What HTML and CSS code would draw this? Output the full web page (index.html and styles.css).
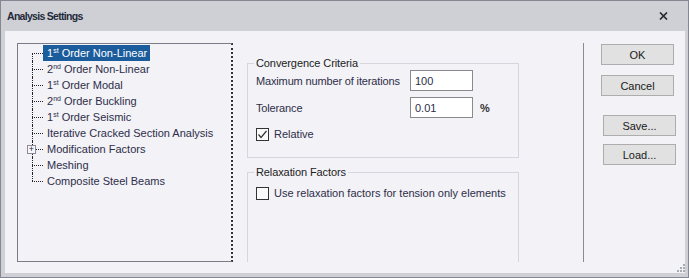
FILE: index.html
```html
<!DOCTYPE html>
<html lang="en">
<head>
    <meta charset="UTF-8">
    <title>Analysis Settings</title>
    <link rel="stylesheet" href="styles.css">
</head>
<body>

<div class="window">
    <div class="titlebar">
        <span class="title">Analysis Settings</span>
        <svg class="close" width="9" height="8" viewBox="0 0 9 8">
            <path d="M1 0.5 L8 7.5 M8 0.5 L1 7.5" stroke="#2b2b33" stroke-width="1.7"/>
        </svg>
    </div>

    <div class="client">
        <!-- Settings tree -->
        <ul class="tree">
            <li class="node first"><span class="branch"></span><span class="label selected">1<sup>st</sup> Order Non-Linear</span></li>
            <li class="node"><span class="branch"></span><span class="label">2<sup>nd</sup> Order Non-Linear</span></li>
            <li class="node"><span class="branch"></span><span class="label">1<sup>st</sup> Order Modal</span></li>
            <li class="node"><span class="branch"></span><span class="label">2<sup>nd</sup> Order Buckling</span></li>
            <li class="node"><span class="branch"></span><span class="label">1<sup>st</sup> Order Seismic</span></li>
            <li class="node"><span class="branch"></span><span class="label">Iterative Cracked Section Analysis</span></li>
            <li class="node"><span class="branch"><span class="expander">+</span></span><span class="label">Modification Factors</span></li>
            <li class="node"><span class="branch"></span><span class="label">Meshing</span></li>
            <li class="node last"><span class="branch"></span><span class="label">Composite Steel Beams</span></li>
        </ul>

        <!-- Settings page -->
        <div class="settings">
            <fieldset class="group">
                <legend>Convergence Criteria</legend>
                <div class="field-grid">
                    <label for="max-iter">Maximum number of iterations</label>
                    <input type="text" id="max-iter" value="100">
                    <span></span>
                    <label for="tolerance">Tolerance</label>
                    <input type="text" id="tolerance" value="0.01">
                    <span class="unit">%</span>
                </div>
                <div class="check">
                    <span class="box">
                        <svg width="11" height="11" viewBox="0 0 11 11">
                            <path d="M1.5 5.5 L4 8.5 L9.5 2" fill="none" stroke="#333" stroke-width="1.2"/>
                        </svg>
                    </span>
                    Relative
                </div>
            </fieldset>

            <fieldset class="group open">
                <legend>Relaxation Factors</legend>
                <div class="check">
                    <span class="box"></span>
                    Use relaxation factors for tension only elements
                </div>
            </fieldset>
        </div>

        <div class="separator"></div>

        <!-- Dialog buttons -->
        <div class="actions">
            <button class="ok">OK</button>
            <button class="cancel">Cancel</button>
            <button class="save">Save...</button>
            <button class="load">Load...</button>
        </div>

        <svg class="grip" width="8" height="8" viewBox="0 0 8 8">
            <rect x="6" y="0" width="2" height="2" fill="#a9a9b2"/>
            <rect x="3" y="3" width="2" height="2" fill="#a9a9b2"/>
            <rect x="6" y="3" width="2" height="2" fill="#a9a9b2"/>
            <rect x="0" y="6" width="2" height="2" fill="#a9a9b2"/>
            <rect x="3" y="6" width="2" height="2" fill="#a9a9b2"/>
            <rect x="6" y="6" width="2" height="2" fill="#a9a9b2"/>
        </svg>
    </div>
</div>

</body>
</html>
```

FILE: styles.css
```css
body {
    margin: 0;
    font-family: "Liberation Sans", Arial, sans-serif;
    font-size: 11px;
    color: #2e2e48;
}

.window {
    width: 689px;
    height: 278px;
    box-sizing: border-box;
    border: 1px solid #858892;
    background-color: #cfd0d5;
    display: flex;
    flex-direction: column;
}

.titlebar {
    height: 30px;
    flex: none;
    display: flex;
    align-items: center;
    padding-left: 6px;
}

.title {
    font-size: 10.5px;
    font-weight: bold;
    letter-spacing: -0.7px;
    color: #1f2a3a;
}

.close {
    margin-left: auto;
    margin-right: 20px;
}

.client {
    flex: 1;
    margin: 0 3px 4px 4px;
    background-color: #f2f2f7;
    display: flex;
    padding: 12px 0 11px 12px;
    position: relative;
}

/* tree */

.tree {
    width: 216px;
    box-sizing: border-box;
    margin: 0;
    padding: 1px 0 0 0;
    list-style: none;
    border: 1px solid #7c7c88;
    border-right: 2px dotted #333;
}

.node {
    display: flex;
    height: 16px;
    padding-left: 9px;
}

.branch {
    position: relative;
    width: 16px;
    flex: none;
}

.branch::before {
    content: "";
    position: absolute;
    left: 5px;
    top: 0;
    height: 16px;
    border-left: 1px dotted #222;
}

.node.first .branch::before {
    top: 8px;
    height: 8px;
}

.node.last .branch::before {
    height: 8px;
}

.branch::after {
    content: "";
    position: absolute;
    left: 5px;
    top: 8px;
    width: 11px;
    border-top: 1px dotted #222;
}

.expander {
    position: absolute;
    left: 0;
    top: 4px;
    width: 9px;
    height: 9px;
    box-sizing: border-box;
    border: 1px solid #8a8a98;
    background-color: #f7f7fb;
    z-index: 1;
    font-size: 9px;
    line-height: 6px;
    text-align: center;
    color: #2a2a40;
}

.label {
    padding: 0 3px 0 4px;
    line-height: 16px;
    white-space: nowrap;
}

.label sup {
    font-size: 7px;
    vertical-align: 4px;
    line-height: 0;
}

.label.selected {
    background-color: #1b5c9c;
    color: #fff;
}

/* settings groups */

.settings {
    width: 272px;
    margin-left: 14px;
    display: flex;
    flex-direction: column;
    padding-top: 13px;
    box-sizing: border-box;
}

.group {
    margin: 0;
    padding: 0 7px 16px 8px;
    border: 1px solid #d6d6de;
    min-width: 0;
}

.group legend {
    padding: 0 2px;
    margin-left: -2px;
    line-height: 14px;
    color: #222;
    letter-spacing: -0.1px;
}

.group.open {
    flex: 1;
    margin-top: 7px;
    border-bottom: none;
    padding-top: 7px;
}

.field-grid {
    display: grid;
    grid-template-columns: 154px 63px auto;
    row-gap: 6px;
    align-items: center;
}

.field-grid label {
    letter-spacing: -0.15px;
}

.field-grid input {
    width: 63px;
    height: 21px;
    box-sizing: border-box;
    border: 1px solid #8a8a8e;
    background-color: #fff;
    font-family: inherit;
    font-size: 11px;
    color: #2e2e48;
    padding: 0 4px;
    margin: 0;
}

.unit {
    margin-left: 7px;
    font-weight: bold;
    color: #333;
}

.check {
    display: flex;
    align-items: center;
    gap: 5px;
    margin-top: 9px;
    line-height: 14px;
}

.group.open .check {
    margin-top: 0;
}

.box {
    width: 13px;
    height: 13px;
    box-sizing: border-box;
    border: 1px solid #333;
    background-color: #fafafc;
    display: flex;
    align-items: center;
    justify-content: center;
}

/* right side */

.separator {
    width: 1px;
    margin-left: 64px;
    background-color: #8a8a92;
}

.actions {
    display: flex;
    flex-direction: column;
    margin-left: 17px;
}

.actions button {
    width: 73px;
    height: 21px;
    padding: 0;
    border: 1px solid #adadad;
    background-color: #e1e1e1;
    font-family: inherit;
    font-size: 11px;
    color: #1a1a1a;
}

.ok {
    margin-top: 1px;
}

.cancel {
    margin-top: 10px;
}

.save {
    margin-top: 19px;
    margin-left: 2px;
}

.load {
    margin-top: 8px;
    margin-left: 2px;
}

.grip {
    position: absolute;
    right: 0;
    bottom: 1px;
}
```
